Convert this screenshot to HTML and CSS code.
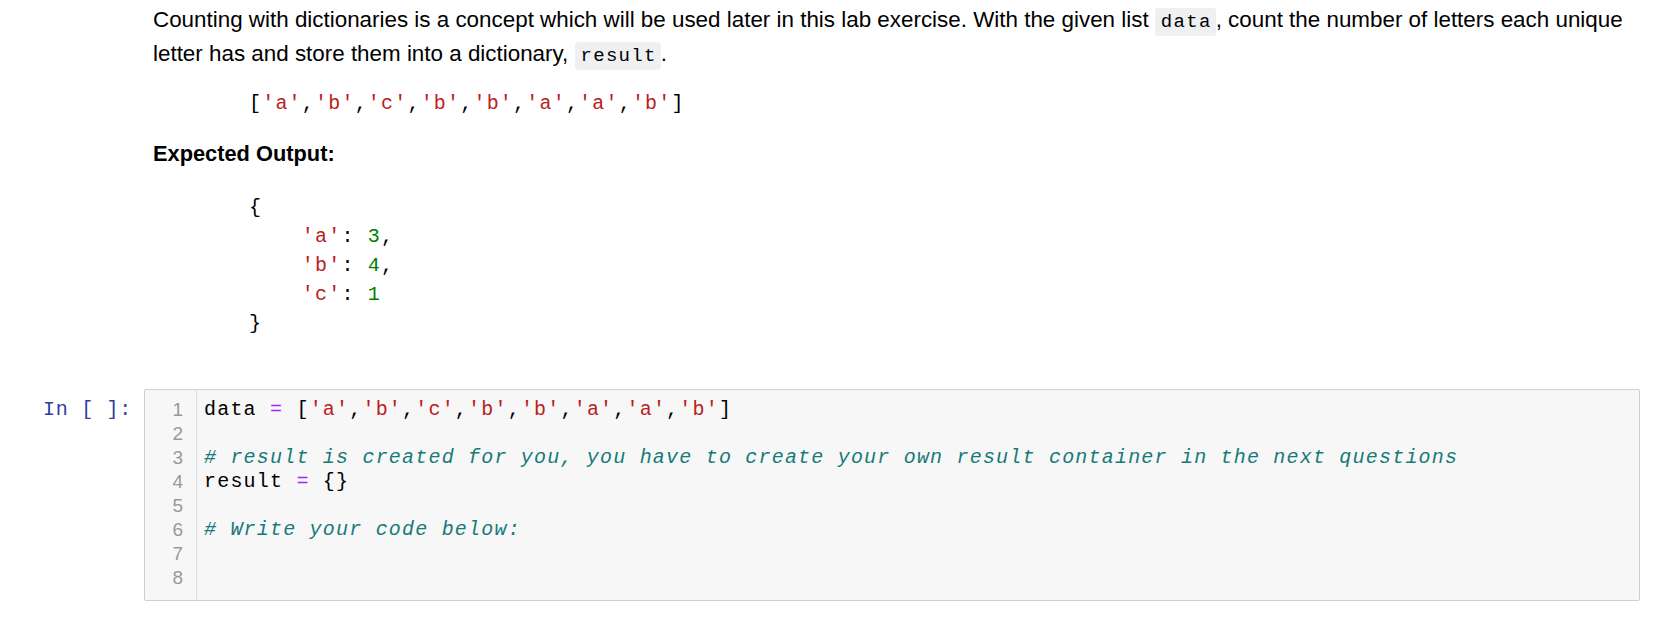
FILE: index.html
```html
<!DOCTYPE html>
<html>
<head>
<meta charset="utf-8">
<link rel="stylesheet" href="styles.css">
</head>
<body>
<div class="notebook">
  <div class="md-cell">
    <p class="para">Counting with dictionaries is a concept which will be used later in this lab exercise. With the given list <code class="ic">data</code>, count the number of letters each unique<br>letter has and store them into a dictionary, <code class="ic">result</code>.</p>
    <pre class="md-pre">[<span class="s">'a'</span>,<span class="s">'b'</span>,<span class="s">'c'</span>,<span class="s">'b'</span>,<span class="s">'b'</span>,<span class="s">'a'</span>,<span class="s">'a'</span>,<span class="s">'b'</span>]</pre>
    <p class="heading">Expected Output:</p>
    <pre class="md-pre dict">{
    <span class="s">'a'</span>: <span class="n">3</span>,
    <span class="s">'b'</span>: <span class="n">4</span>,
    <span class="s">'c'</span>: <span class="n">1</span>
}</pre>
  </div>
  <div class="code-cell">
    <div class="prompt">In [ ]:</div>
    <div class="editor">
      <div class="gutter">
        <div>1</div><div>2</div><div>3</div><div>4</div><div>5</div><div>6</div><div>7</div><div>8</div>
      </div>
      <pre class="code"><span>data <span class="op">=</span> [<span class="s">'a'</span>,<span class="s">'b'</span>,<span class="s">'c'</span>,<span class="s">'b'</span>,<span class="s">'b'</span>,<span class="s">'a'</span>,<span class="s">'a'</span>,<span class="s">'b'</span>]</span>

<span class="c"># result is created for you, you have to create your own result container in the next questions</span>
result <span class="op">=</span> {}

<span class="c"># Write your code below:</span>

</pre>
    </div>
  </div>
</div>
</body>
</html>
```

FILE: styles.css
```css
html, body {
  margin: 0;
  padding: 0;
  background: #ffffff;
}

.notebook {
  width: 1666px;
  color: #000;
}

.md-cell {
  padding-left: 153px;
  padding-right: 26px;
  padding-top: 4px;
}

.para {
  margin: 0;
  font-family: "Liberation Sans", Arial, sans-serif;
  font-size: 22.4px;
  line-height: 31px;
}

.ic {
  font-family: "Liberation Mono", monospace;
  font-size: 19px;
  letter-spacing: 1.3px;
  background: #eff0f1;
  border-radius: 3px;
  padding: 3px 4px 3px 6px;
}

.md-pre {
  margin: 18px 0 0 96px;
  font-family: "Liberation Mono", monospace;
  font-size: 20px;
  letter-spacing: 1.2px;
  line-height: 28px;
  color: #000;
}

.heading {
  margin: 21px 0 0 0;
  font-family: "Liberation Sans", Arial, sans-serif;
  font-weight: bold;
  font-size: 21.8px;
  line-height: 30px;
}

.dict {
  margin-top: 24px;
  line-height: 29px;
}

.s { color: #ba2121; }
.n { color: #008000; }
.op { color: #aa22ff; }
.c { color: #167a78; font-style: italic; }

.code-cell {
  display: flex;
  align-items: flex-start;
  margin-top: 51px;
  padding-right: 26px;
}

.prompt {
  width: 132px;
  padding-right: 12px;
  padding-top: 9px;
  text-align: right;
  font-family: "Liberation Mono", monospace;
  font-size: 20px;
  letter-spacing: 0.7px;
  line-height: 24px;
  color: #303f9f;
  flex: none;
}

.editor {
  flex: 1;
  display: flex;
  background: #f7f7f7;
  border: 1px solid #cfcfcf;
  border-radius: 2px;
  padding: 0;
}

.gutter {
  width: 38px;
  padding: 8px 13px 10px 0;
  border-right: 1px solid #dddddd;
  text-align: right;
  font-family: "Liberation Sans", Arial, sans-serif;
  font-size: 19px;
  line-height: 24px;
  color: #999999;
}

.code {
  margin: 0;
  padding: 8px 0 10px 7px;
  font-family: "Liberation Mono", monospace;
  font-size: 20px;
  letter-spacing: 1.2px;
  line-height: 24px;
  color: #000;
}
```
